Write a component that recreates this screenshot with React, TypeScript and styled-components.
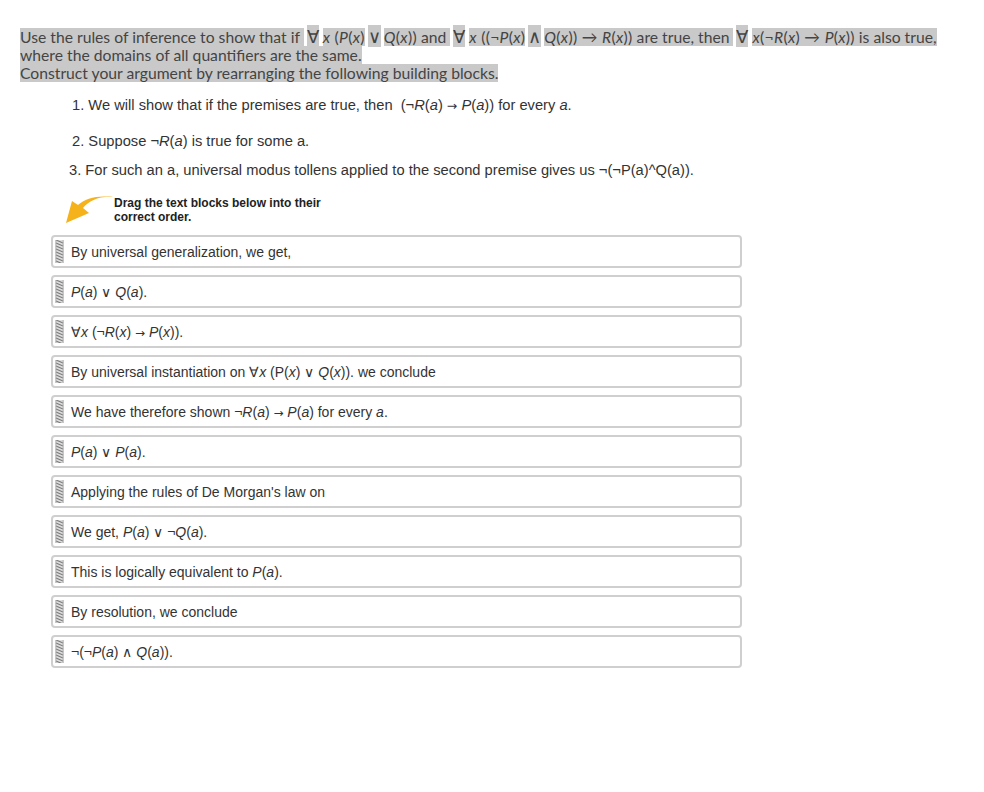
import React from 'react';
import styled, { createGlobalStyle } from 'styled-components';

const GlobalStyle = createGlobalStyle`
    body {
        margin: 0;
        background: #fff;
        font-family: 'Liberation Sans', Arial, sans-serif;
        color: #333;
    }
`;

const Page = styled.div`
    width: 984px;
    min-height: 792px;
    padding: 28px 0 0 20px;
    box-sizing: border-box;
`;

const Intro = styled.p`
    margin: 0;
    width: 960px;
    font-family: 'Lato', 'Open Sans', sans-serif;
    font-size: 15.7px;
    line-height: 18px;
    color: #444;
`;

const Hl = styled.span<{ $gap?: boolean }>`
    background: #c9c9c9;
    margin-right: ${(p) => (p.$gap ? '3px' : '0')};
`;

const MathHl = styled(Hl)`
    letter-spacing: 0.3px;
`;

const Quant = styled(Hl)`
    font-size: 1.15em;
    line-height: 0;
`;

const Sym = styled.span`
    font-family: 'DejaVu Sans', sans-serif;
    font-size: 0.85em;
`;

const Steps = styled.div`
    margin-top: 14px;
    font-size: 14.7px;
    display: flex;
    flex-direction: column;
`;

const Step = styled.div<{ $indent: number; $top: number }>`
    padding-left: ${(p) => p.$indent}px;
    margin-top: ${(p) => p.$top}px;
    line-height: 18px;
`;

const Hint = styled.div`
    display: flex;
    align-items: flex-start;
    margin: 16px 0 0 45px;
`;

const HintText = styled.div`
    font-size: 12px;
    font-weight: bold;
    line-height: 14px;
    color: #222;
    margin-top: 1px;
`;

const Blocks = styled.div`
    margin: 10px 0 0 31px;
    width: 691px;
    display: flex;
    flex-direction: column;
    gap: 7px;
`;

const Block = styled.div`
    height: 33px;
    box-sizing: border-box;
    border: 2px solid #cfcfcf;
    border-radius: 4px;
    display: flex;
    align-items: center;
    padding-left: 2px;
    font-size: 14px;
    color: #333;
    background: #fff;
`;

const BlockText = styled.span`
    margin-left: 7px;
`;

const Grip = () => (
    <svg width="9" height="23" viewBox="0 0 9 23">
        <rect x="0" y="0" width="9" height="23" fill="#dedede" />
        {Array.from({ length: 8 }).map((_, i) => (
            <path
                key={i}
                d={`M1 ${i * 3} L8 ${3 + i * 3}`}
                stroke="#7c7c7c"
                strokeWidth="1.1"
                fill="none"
            />
        ))}
        <path d="M1 0 L1 23 M8 0 L8 23" stroke="#a8a8a8" strokeWidth="0.8" />
    </svg>
);

const Arrow = () => (
    <svg width="49" height="30" viewBox="0 0 49 30">
        <path
            d="M48 2 C34 1 24 6 18 13 L24 18 L1 28 L7 6 L13 10 C20 3 33 0 48 2 Z"
            fill="#f6b21b"
        />
    </svg>
);

const blocks: React.ReactNode[] = [
    <>By universal generalization, we get,</>,
    <><i>P</i>(<i>a</i>) ∨ <i>Q</i>(<i>a</i>).</>,
    <>∀<i>x</i> (¬<i>R</i>(<i>x</i>) <Sym>→</Sym> <i>P</i>(<i>x</i>)).</>,
    <>By universal instantiation on ∀<i>x</i> (P(<i>x</i>) ∨ <i>Q</i>(<i>x</i>)). we conclude</>,
    <>We have therefore shown ¬<i>R</i>(<i>a</i>) <Sym>→</Sym> <i>P</i>(<i>a</i>) for every <i>a</i>.</>,
    <><i>P</i>(<i>a</i>) ∨ <i>P</i>(<i>a</i>).</>,
    <>Applying the rules of De Morgan's law on</>,
    <>We get, <i>P</i>(<i>a</i>) ∨ ¬<i>Q</i>(<i>a</i>).</>,
    <>This is logically equivalent to <i>P</i>(<i>a</i>).</>,
    <>By resolution, we conclude</>,
    <>¬(¬<i>P</i>(<i>a</i>) ∧ <i>Q</i>(<i>a</i>)).</>,
];

export default function App() {
    return (
        <Page>
            <GlobalStyle />
            <Intro>
                <Hl $gap>Use the rules of inference to show that if </Hl>
                <Quant>∀</Quant> <MathHl $gap><i>x</i> (<i>P</i>(<i>x</i>)</MathHl>
                <Quant $gap>∨</Quant>
                <MathHl><i>Q</i>(<i>x</i>))</MathHl>
                <Hl $gap> and </Hl>
                <Quant>∀</Quant> <MathHl $gap><i>x</i> ((¬<i>P</i>(<i>x</i>)</MathHl>
                <Quant $gap>∧</Quant>
                <MathHl><i>Q</i>(<i>x</i>)) → <i>R</i>(<i>x</i>))</MathHl>
                <Hl $gap> are true, then </Hl>
                <Quant>∀</Quant> <MathHl><i>x</i>(¬<i>R</i>(<i>x</i>) → <i>P</i>(<i>x</i>))</MathHl>
                <Hl> is also true,</Hl>
                <br />
                <Hl>where the domains of all quantifiers are the same.</Hl>
                <br />
                <Hl>Construct your argument by rearranging the following building blocks.</Hl>
            </Intro>
            <Steps>
                <Step $indent={52} $top={0}>
                    1. We will show that if the premises are true, then&nbsp; (¬<i>R</i>(<i>a</i>) <Sym>→</Sym> <i>P</i>(<i>a</i>)) for every <i>a</i>.
                </Step>
                <Step $indent={52} $top={17}>
                    2. Suppose ¬<i>R</i>(<i>a</i>) is true for some a.
                </Step>
                <Step $indent={49} $top={11}>
                    3. For such an a, universal modus tollens applied to the second premise gives us ¬(¬P(a)^Q(a)).
                </Step>
            </Steps>
            <Hint>
                <Arrow />
                <HintText>
                    Drag the text blocks below into their
                    <br />
                    correct order.
                </HintText>
            </Hint>
            <Blocks>
                {blocks.map((b, i) => (
                    <Block key={i}>
                        <Grip />
                        <BlockText>{b}</BlockText>
                    </Block>
                ))}
            </Blocks>
        </Page>
    );
}
